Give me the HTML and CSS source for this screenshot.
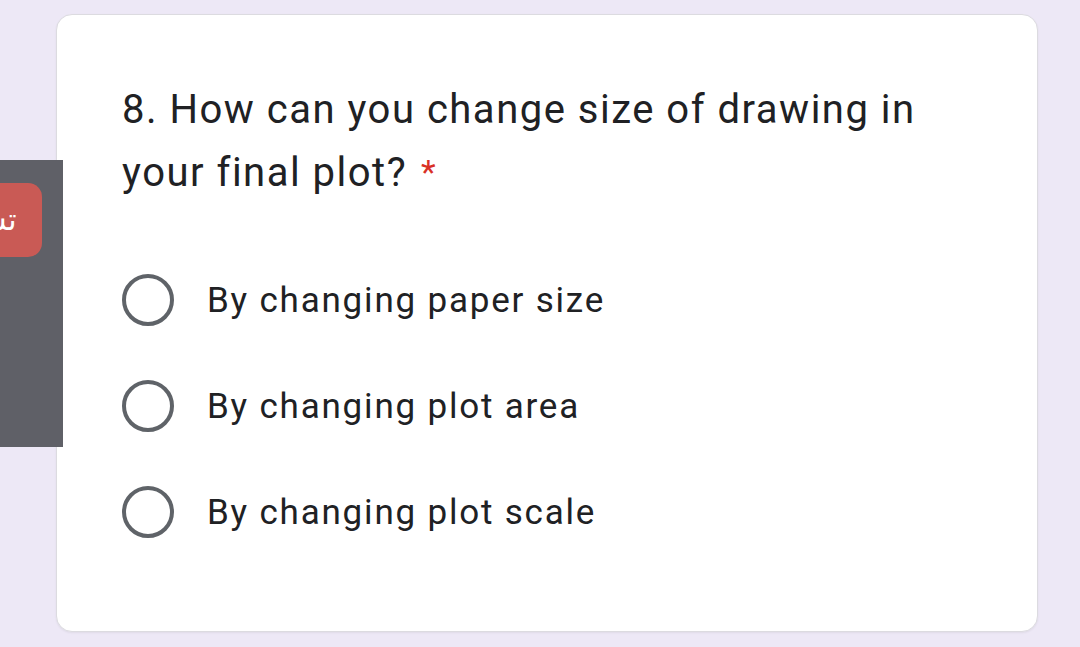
FILE: index.html
```html
<!DOCTYPE html>
<html>
<head>
<meta charset="utf-8">
<link rel="stylesheet" href="styles.css">
</head>
<body>
<div class="page">
  <div class="card">
    <div class="question">8. How can you change size of drawing in your final plot?<span class="req">*</span></div>
    <div class="options">
      <div class="option"><span class="radio"></span><span class="label">By changing paper size</span></div>
      <div class="option"><span class="radio"></span><span class="label">By changing plot area</span></div>
      <div class="option"><span class="radio"></span><span class="label">By changing plot scale</span></div>
    </div>
  </div>
  <div class="sidepanel">
    <div class="sidebtn" lang="ar" dir="rtl">تس</div>
  </div>
</div>
</body>
</html>
```
FILE: styles.css
```css
html, body {
  margin: 0;
  padding: 0;
  background: #ede8f6;
  width: 1080px;
  height: 647px;
  overflow: hidden;
}
.page {
  position: relative;
  width: 1080px;
  height: 647px;
  padding: 14px 42px 0 56px;
  box-sizing: border-box;
}
.card {
  background: #ffffff;
  border: 1px solid #dcdbe0;
  border-radius: 16px;
  height: 618px;
  box-sizing: border-box;
  padding: 63px 40px 0 65px;
  box-shadow: 0 1px 2px rgba(60, 64, 67, 0.08);
}
.question {
  font-family: Roboto, "Open Sans", sans-serif;
  font-size: 40px;
  line-height: 63px;
  color: #202124;
  letter-spacing: 1.5px;
  width: 830px;
}
.req {
  color: #d93025;
  margin-left: 14px;
  font-size: 34px;
  letter-spacing: 0;
  vertical-align: 2px;
}
.options {
  margin-top: 70px;
  display: flex;
  flex-direction: column;
  gap: 54px;
}
.option {
  display: flex;
  align-items: center;
  height: 52px;
}
.radio {
  width: 44px;
  height: 44px;
  border: 4px solid #5f6368;
  border-radius: 50%;
  flex: none;
}
.label {
  margin-left: 33px;
  font-family: Roboto, "Open Sans", sans-serif;
  font-size: 35px;
  color: #202124;
  letter-spacing: 1.8px;
}
.sidepanel {
  position: absolute;
  left: 0;
  top: 160px;
  width: 63px;
  height: 287px;
  background: #5f6067;
}
.sidebtn {
  position: absolute;
  left: -30px;
  top: 23px;
  width: 72px;
  height: 74px;
  background: #c95a55;
  border-radius: 14px;
  color: #fff;
  font-family: "DejaVu Sans", "Noto Sans", sans-serif;
  font-size: 30px;
  line-height: 74px;
  text-align: left;
  box-sizing: border-box;
  direction: ltr;
}
```
